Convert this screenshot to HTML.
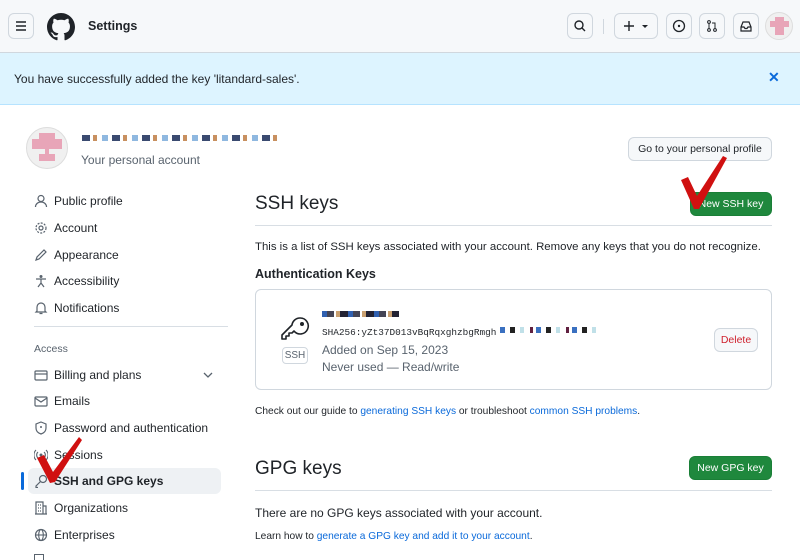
<!DOCTYPE html>
<html><head><meta charset="utf-8"><style>
*{box-sizing:border-box;margin:0;padding:0}
body{width:800px;height:560px;overflow:hidden;background:#fff;font-family:"Liberation Sans",sans-serif;color:#1f2328;font-size:12px;position:relative}
.abs{position:absolute}
.hdr{left:0;top:0;width:800px;height:53px;background:#f6f8fa;border-bottom:1px solid #d0d7de}
.btn{position:absolute;border:1px solid #d0d7de;border-radius:6px;background:#f6f8fa;height:26px}
.flash{left:0;top:53px;width:800px;height:52px;background:#ddf4ff;border-bottom:1px solid #b6e3ff}
.nav{position:absolute;left:20px;width:201px;height:26px;line-height:26px;font-size:12px;padding-left:34px}
.nav svg{position:absolute;left:14px;top:6px}
.link{color:#0969da}
.gbtn{position:absolute;background:#1f883d;color:#fff;font-size:10.5px;border-radius:6px;text-align:center;border:1px solid #1a7f37}
.pix{position:absolute;height:6px}
</style></head><body>
<div class="abs hdr"></div>
<div class="btn" style="left:8px;top:13px;width:26px"><svg width="24" height="24" viewBox="0 0 24 24"><path d="M7 8h10M7 12h10M7 16h10" stroke="#1f2328" stroke-width="1.5"/></svg></div>
<svg class="abs" style="left:47px;top:13px" width="28" height="28" viewBox="0 0 16 16"><path fill="#1f2328" d="M8 0C3.58 0 0 3.58 0 8c0 3.54 2.29 6.530 5.47 7.59.4.07.55-.17.55-.38 0-.19-.01-.82-.01-1.49-2.01.37-2.53-.49-2.69-.94-.09-.23-.48-.94-.82-1.130-.28-.15-.68-.52-.01-.53.63-.01 1.08.58 1.23.82.72 1.21 1.87.87 2.33.66.07-.52.28-.87.51-1.07-1.78-.2-3.64-.89-3.64-3.95 0-.87.31-1.59.82-2.15-.08-.2-.36-1.02.08-2.12 0 0 .67-.21 2.2.82.64-.18 1.32-.27 2-.27.68 0 1.36.09 2 .27 1.53-1.04 2.2-.82 2.2-.82.44 1.1.16 1.92.08 2.12.51.56.82 1.27.82 2.15 0 3.07-1.87 3.75-3.65 3.95.29.25.54.73.54 1.48 0 1.07-.01 1.93-.01 2.2 0 .21.15.46.55.38A8.013 8.013 0 0016 8c0-4.42-3.58-8-8-8z"/></svg>
<div class="abs" style="left:88px;top:19px;font-size:12.5px;font-weight:bold">Settings</div>
<div class="btn" style="left:567px;top:13px;width:26px"><svg width="24" height="24" viewBox="0 0 24 24"><circle cx="11" cy="11" r="4" fill="none" stroke="#1f2328" stroke-width="1.4"/><path d="M14 14l3 3" stroke="#1f2328" stroke-width="1.4"/></svg></div>
<div class="abs" style="left:603px;top:19px;width:1px;height:15px;background:#d0d7de"></div>
<div class="btn" style="left:614px;top:13px;width:44px"><svg width="42" height="24" viewBox="0 0 42 24"><path d="M14 7v10M9 12h10" stroke="#1f2328" stroke-width="1.4"/><path d="M27 11h6l-3 3z" fill="#1f2328"/></svg></div>
<div class="btn" style="left:666px;top:13px;width:26px"><svg width="24" height="24" viewBox="0 0 24 24"><circle cx="12" cy="12" r="5.5" fill="none" stroke="#1f2328" stroke-width="1.3"/><circle cx="12" cy="12" r="1.2" fill="#1f2328"/></svg></div>
<div class="btn" style="left:699px;top:13px;width:26px"><svg width="24" height="24" viewBox="0 0 24 24"><circle cx="9" cy="8" r="1.4" fill="none" stroke="#1f2328"/><circle cx="9" cy="16" r="1.4" fill="none" stroke="#1f2328"/><circle cx="15" cy="16" r="1.4" fill="none" stroke="#1f2328"/><path d="M9 9.5v5M15 14.5V9h-3" stroke="#1f2328" fill="none"/></svg></div>
<div class="btn" style="left:733px;top:13px;width:26px"><svg width="24" height="24" viewBox="0 0 24 24"><path d="M7 13l2-5h6l2 5v4H7z M7 13h3l1 1.5h2l1-1.5h3" stroke="#1f2328" fill="none" stroke-width="1.2"/></svg></div>
<div class="abs" style="left:765px;top:12px;width:28px;height:28px;border-radius:50%;background:#f0f0f0;border:1px solid #ddd;overflow:hidden"><div class="abs" style="left:4px;top:8px;width:19px;height:6px;background:#e8a5b8"></div><div class="abs" style="left:9px;top:4px;width:9px;height:18px;background:#e8a5b8"></div></div>
<div class="abs flash"></div>
<div class="abs" style="left:14px;top:72px;font-size:12px">You have successfully added the key 'litandard-sales'.</div>
<div class="abs" style="left:768px;top:69px;font-size:14px;color:#0969da;font-weight:bold">✕</div>
<div class="abs" style="left:26px;top:127px;width:42px;height:42px;border-radius:50%;background:#f0f0f0;border:1px solid #ddd;overflow:hidden"><div class="abs" style="left:5px;top:11px;width:30px;height:10px;background:#e8a5b8"></div><div class="abs" style="left:12px;top:5px;width:16px;height:28px;background:#e8a5b8"></div><div class="abs" style="left:12px;top:21px;width:6px;height:5px;background:#f0f0f0"></div><div class="abs" style="left:22px;top:21px;width:6px;height:5px;background:#f0f0f0"></div></div>
<div class="pix" style="left:82px;top:135px;width:195px;background:repeating-linear-gradient(90deg,#3a4a70 0 8px,#fff 8px 11px,#c89060 11px 15px,#fff 15px 20px,#8fb8e0 20px 26px,#fff 26px 30px)"></div>
<div class="abs" style="left:81px;top:153px;font-size:12px;color:#59636e">Your personal account</div>
<div class="btn" style="left:628px;top:137px;width:144px;height:24px;line-height:22px;text-align:center;font-size:10.5px">Go to your personal profile</div>

<div class="nav" style="top:188px">Public profile<svg width="14" height="14"><circle cx="7" cy="4.5" r="3" fill="none" stroke="#59636e" stroke-width="1.2"/><path d="M1.5 13c0-3 2.5-5 5.5-5s5.5 2 5.5 5" fill="none" stroke="#59636e" stroke-width="1.2"/></svg></div>
<div class="nav" style="top:215px">Account<svg width="14" height="14"><circle cx="7" cy="7" r="5" fill="none" stroke="#59636e" stroke-width="1.2" stroke-dasharray="2 1.3"/><circle cx="7" cy="7" r="2" fill="none" stroke="#59636e" stroke-width="1.2"/></svg></div>
<div class="nav" style="top:242px">Appearance<svg width="14" height="14"><path d="M2 12l1-3 7-7 2 2-7 7z" fill="none" stroke="#59636e" stroke-width="1.2"/></svg></div>
<div class="nav" style="top:268px">Accessibility<svg width="14" height="14"><circle cx="7" cy="2.5" r="1.5" fill="#59636e"/><path d="M2 5h10M7 5v4l-3 4M7 9l3 4" fill="none" stroke="#59636e" stroke-width="1.2"/></svg></div>
<div class="nav" style="top:295px">Notifications<svg width="14" height="14"><path d="M3 10V6a4 4 0 018 0v4l1 1H2z M5.5 12.5h3" fill="none" stroke="#59636e" stroke-width="1.2"/></svg></div>
<div class="abs" style="left:34px;top:326px;width:194px;height:1px;background:#d8dee4"></div>
<div class="abs" style="left:34px;top:343px;font-size:10.5px;color:#59636e">Access</div>
<div class="nav" style="top:362px">Billing and plans<svg width="14" height="14"><rect x="1" y="3" width="12" height="9" rx="1" fill="none" stroke="#59636e" stroke-width="1.2"/><path d="M1 6h12" stroke="#59636e" stroke-width="1.2"/></svg></div>
<svg class="abs" style="left:202px;top:369px" width="12" height="12"><path d="M2 4l4 4 4-4" fill="none" stroke="#59636e" stroke-width="1.3"/></svg>
<div class="nav" style="top:388px">Emails<svg width="14" height="14"><rect x="1" y="3" width="12" height="9" rx="1" fill="none" stroke="#59636e" stroke-width="1.2"/><path d="M1 4l6 4 6-4" fill="none" stroke="#59636e" stroke-width="1.2"/></svg></div>
<div class="nav" style="top:415px">Password and authentication<svg width="14" height="14"><path d="M7 1l5 2v4c0 3-2 5-5 6-3-1-5-3-5-6V3z" fill="none" stroke="#59636e" stroke-width="1.2"/><circle cx="7" cy="6" r="1" fill="#59636e"/></svg></div>
<div class="nav" style="top:442px">Sessions<svg width="14" height="14"><circle cx="7" cy="7" r="1.5" fill="#59636e"/><path d="M4 4a4 4 0 000 6M10 4a4 4 0 010 6M2 2a7 7 0 000 10M12 2a7 7 0 010 10" fill="none" stroke="#59636e" stroke-width="1.1"/></svg></div>
<div class="abs" style="left:28px;top:468px;width:193px;height:26px;background:#eef1f4;border-radius:6px"></div>
<div class="abs" style="left:21px;top:472px;width:3px;height:18px;background:#0969da;border-radius:2px"></div>
<div class="nav" style="top:468px;font-weight:bold">SSH and GPG keys<svg width="14" height="14"><circle cx="9" cy="5" r="3.5" fill="none" stroke="#59636e" stroke-width="1.2"/><path d="M6.5 7.5L2 12v1.5h2" fill="none" stroke="#59636e" stroke-width="1.2"/></svg></div>
<div class="nav" style="top:495px">Organizations<svg width="14" height="14"><path d="M2 13V1h7v12M9 5h3v8M1 13h12M4 4h1M6 4h1M4 7h1M6 7h1M4 10h1M6 10h1" fill="none" stroke="#59636e" stroke-width="1.2"/></svg></div>
<div class="nav" style="top:522px">Enterprises<svg width="14" height="14"><circle cx="7" cy="7" r="5.5" fill="none" stroke="#59636e" stroke-width="1.2"/><ellipse cx="7" cy="7" rx="2.3" ry="5.5" fill="none" stroke="#59636e" stroke-width="1.1"/><path d="M1.5 7h11" stroke="#59636e" stroke-width="1.1"/></svg></div>
<div class="abs" style="left:34px;top:554px;width:10px;height:6px;border:1.2px solid #59636e;border-bottom:none"></div>

<div class="abs" style="left:255px;top:193px;font-size:19px">SSH keys</div>
<div class="gbtn" style="left:690px;top:192px;width:82px;height:24px;line-height:22px">New SSH key</div>
<div class="abs" style="left:255px;top:225px;width:517px;height:1px;background:#d8dee4"></div>
<div class="abs" style="left:255px;top:241px;font-size:11.4px">This is a list of SSH keys associated with your account. Remove any keys that you do not recognize.</div>
<div class="abs" style="left:255px;top:267px;font-size:12.5px;font-weight:bold">Authentication Keys</div>
<div class="abs" style="left:255px;top:289px;width:517px;height:101px;border:1px solid #d0d7de;border-radius:6px"></div>
<svg class="abs" style="left:280px;top:316px" width="30" height="28" viewBox="0 0 30 28"><path d="M20 2a8 8 0 11-6 13l-2 2h-3v3H6v3H2v-4l10-10A8 8 0 0120 2z" fill="none" stroke="#1f2328" stroke-width="1.6" stroke-linejoin="round"/><circle cx="22" cy="8" r="2" fill="#1f2328"/></svg>
<div class="abs" style="left:282px;top:347px;width:26px;height:17px;border:1px solid #d0d7de;border-radius:4px;font-size:10px;line-height:15px;text-align:center;color:#59636e">SSH</div>
<div class="pix" style="left:322px;top:311px;width:77px;background:repeating-linear-gradient(90deg,#3060b0 0 5px,#445 5px 12px,#fff 12px 14px,#c9a070 14px 18px,#223 18px 26px)"></div>
<div class="abs" style="left:322px;top:327px;font-family:'Liberation Mono',monospace;font-size:9.4px">SHA256:yZt37D013vBqRqxghzbgRmgh</div>
<div class="pix" style="left:500px;top:327px;width:97px;background:repeating-linear-gradient(90deg,#3a70c0 0 5px,#fff 5px 10px,#222 10px 15px,#fff 15px 20px,#c0e0e8 20px 24px,#fff 24px 30px,#602040 30px 33px,#fff 33px 36px)"></div>
<div class="abs" style="left:322px;top:343px;font-size:12px;color:#59636e">Added on Sep 15, 2023</div>
<div class="abs" style="left:322px;top:360px;font-size:12px;color:#59636e">Never used — Read/write</div>
<div class="btn" style="left:714px;top:328px;width:44px;height:24px;line-height:22px;text-align:center;color:#cf222e;font-size:10.5px">Delete</div>
<div class="abs" style="left:255px;top:406px;font-size:10.2px">Check out our guide to <span class="link">generating SSH keys</span> or troubleshoot <span class="link">common SSH problems</span>.</div>
<div class="abs" style="left:255px;top:458px;font-size:19px">GPG keys</div>
<div class="gbtn" style="left:689px;top:456px;width:83px;height:24px;line-height:22px">New GPG key</div>
<div class="abs" style="left:255px;top:490px;width:517px;height:1px;background:#d8dee4"></div>
<div class="abs" style="left:255px;top:506px;font-size:12px">There are no GPG keys associated with your account.</div>
<div class="abs" style="left:255px;top:531px;font-size:10.2px">Learn how to <span class="link">generate a GPG key and add it to your account</span>.</div>

<svg class="abs" style="left:0;top:0" width="800" height="560"><path d="M681 180l7-3 9 19 26-40 4 2-28 51-5 0z" fill="#d01010"/><path d="M37 458l7-3 9 17 26-35 3 3-27 42-5 1z" fill="#d01010"/></svg>
</body></html>
